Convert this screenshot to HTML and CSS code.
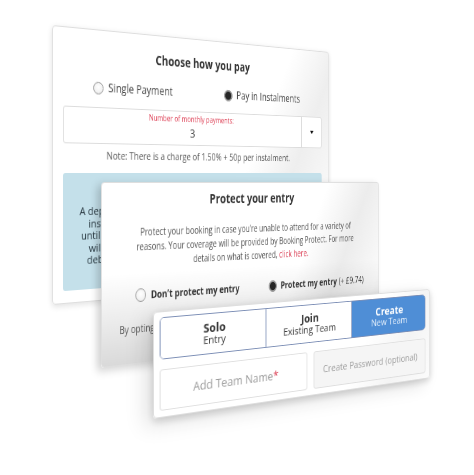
FILE: index.html
```html
<!DOCTYPE html>
<html lang="en">
<head>
<meta charset="utf-8">
<title>Booking steps</title>
<link rel="stylesheet" href="styles.css">
</head>
<body>
<div class="stage">

  <section class="card card-pay" id="card-pay">
    <h2 class="pay-title">Choose how you pay</h2>
    <div class="pay-options">
      <label class="radio"><span class="dot"></span>Single Payment</label>
      <label class="radio"><span class="dot dot-on"></span>Pay in Instalments</label>
    </div>
    <div class="select">
      <div class="select-value">
        <span class="select-label">Number of monthly payments:</span>
        <span class="select-num">3</span>
      </div>
      <div class="select-arrow">
        <svg width="6" height="4" viewBox="0 0 6 4"><polygon points="0,0 6,0 3,4" fill="#111"/></svg>
      </div>
    </div>
    <p class="pay-note">Note: There is a charge of 1.50% + 50p per instalment.</p>
    <div class="info">
      <p>A deposit of £25.00 will be taken today and the remaining sum<br>instalments will be collected automatically every month so<br>until the full balance is paid off. Your first instalment payment<br>will be taken a month from today, and the remaining ones<br>debited on the same day each month from the card on file.</p>
    </div>
  </section>

  <section class="card card-protect" id="card-protect">
    <h2 class="protect-title">Protect your entry</h2>
    <p class="protect-text">Protect your booking in case you’re unable to attend for a variety of<br>reasons. Your coverage will be provided by Booking Protect. For more<br>details on what is covered, <a class="link">click here.</a></p>
    <div class="protect-options">
      <label class="radio radio-bold"><span class="dot dot-lg"></span>Don’t protect my entry</label>
      <label class="radio radio-bold"><span class="dot dot-on"></span>Protect my entry <span class="price">(+ £9.74)</span></label>
    </div>
    <p class="protect-terms">By opting in you confirm that you have read and agree to the terms of cover.</p>
  </section>

  <section class="card card-team" id="card-team">
    <div class="seg">
      <div class="seg-item"><strong>Solo</strong><span>Entry</span></div>
      <div class="seg-item"><strong>Join</strong><span>Existing Team</span></div>
      <div class="seg-item seg-active"><strong>Create</strong><span>New Team</span></div>
    </div>
    <div class="fields">
      <div class="field">Add Team Name<span class="req">*</span></div>
      <div class="field field-pw">Create Password (optional)</div>
    </div>
  </section>

</div>
<script src="script.js"></script>
</body>
</html>
```

FILE: styles.css
```css
* { box-sizing: border-box; }

html, body {
  margin: 0;
  background: #fff;
}

body {
  font-family: "Open Sans", "Noto Sans", sans-serif;
  color: #444;
}

.stage {
  position: relative;
  width: 474px;
  height: 475px;
  overflow: hidden;
}

.card {
  position: absolute;
  left: 0;
  top: 0;
  transform-origin: 0 0;
  border: 1px solid #dedede;
  border-radius: 4px;
  background: linear-gradient(118deg, #ffffff 0%, #ffffff 62%, #eeeeee 76%, #f9f9f9 90%, #f4f4f4 100%);
}

/* ---------- card 1 : payment ---------- */
.card-pay {
  width: 400px;
  height: 280px;
  padding: 0 12px;
  box-shadow: 0 2px 6px rgba(0, 0, 0, 0.12);
}

.pay-title {
  margin: 17px 0 0;
  font-size: 13.5px;
  line-height: 18px;
  font-weight: 700;
  text-align: center;
  color: #333;
}

.pay-options {
  display: flex;
  justify-content: space-around;
  align-items: center;
  height: 16px;
  margin-top: 16px;
}

.radio {
  display: flex;
  align-items: center;
  gap: 6px;
  font-size: 12px;
  line-height: 16px;
  color: #444;
  white-space: nowrap;
}

.dot {
  width: 13px;
  height: 13px;
  border-radius: 50%;
  border: 1px solid #9a9a9a;
  background: radial-gradient(circle at 50% 40%, #ffffff 0%, #f2f2f2 60%, #dcdcdc 100%);
  flex: none;
}

.dot-lg {
  width: 14px;
  height: 14px;
}

.dot-on {
  background: radial-gradient(circle, #262626 0 4.2px, #8a8a8a 4.8px, #d8d8d8 6px);
  border-color: #8c8c8c;
}

.select {
  display: flex;
  height: 38px;
  margin-top: 12px;
  border: 1px solid #dcdcdc;
  border-radius: 3px;
  background: #fff;
}

.select-value {
  flex: 1;
  display: flex;
  flex-direction: column;
  align-items: center;
  padding-top: 2px;
}

.select-label {
  font-size: 8.5px;
  line-height: 11px;
  color: #dd3c52;
}

.select-num {
  margin-top: 2px;
  font-size: 13px;
  line-height: 16px;
  color: #444;
}

.select-arrow {
  width: 34px;
  display: flex;
  align-items: center;
  justify-content: center;
  border-left: 1px solid #dcdcdc;
}

.pay-note {
  margin: 5px 0 0;
  font-size: 10.6px;
  line-height: 14px;
  text-align: center;
  color: #555;
}

.info {
  height: 119px;
  margin-top: 11px;
  padding-top: 33px;
  border-radius: 3px;
  background: #c4e0ea;
}

.info p {
  margin: 0;
  font-size: 11.5px;
  line-height: 12.5px;
  text-align: center;
  color: #25343d;
  white-space: nowrap;
}

/* ---------- card 2 : protection ---------- */
.card-protect {
  width: 420px;
  height: 186px;
  padding: 0 8px;
  background:
    linear-gradient(180deg, rgba(255, 255, 255, 0) 50%, rgba(0, 0, 0, 0.15) 100%),
    linear-gradient(118deg, #ffffff 0%, #ffffff 64%, #ececec 78%, #fafafa 92%, #f3f3f3 100%);
  box-shadow: -5px 3px 10px rgba(0, 0, 0, 0.18);
}

.protect-title {
  margin: 8px 0 0;
  font-size: 14px;
  line-height: 18px;
  font-weight: 700;
  text-align: center;
  color: #333;
}

.protect-text {
  margin: 17px 0 0;
  font-size: 10.2px;
  line-height: 15px;
  text-align: center;
  color: #555;
  white-space: nowrap;
}

.link {
  color: #d8334a;
}

.protect-options {
  display: grid;
  grid-template-columns: 1fr 1fr;
  justify-items: center;
  align-items: center;
  height: 16px;
  margin-top: 19px;
  padding-left: 10px;
}

.radio-bold {
  font-size: 11px;
  font-weight: 700;
  color: #333;
}

.price {
  font-weight: 400;
  margin-left: -3px;
}

.protect-terms {
  margin: 19px 0 0;
  font-size: 10.5px;
  line-height: 15px;
  text-align: center;
  color: #555;
  white-space: nowrap;
}

/* ---------- card 3 : team ---------- */
.card-team {
  width: 350px;
  height: 108px;
  padding: 5px 6px 6px;
  background: linear-gradient(118deg, #ffffff 0%, #ffffff 70%, #f4f4f4 85%, #fbfbfb 100%);
  box-shadow: 0 3px 8px rgba(0, 0, 0, 0.16), -8px 6px 22px rgba(0, 0, 0, 0.12);
}

.seg {
  display: grid;
  grid-template-columns: 120fr 112fr 106fr;
  height: 43px;
  border: 1px solid #7d8fb6;
  border-radius: 5px;
  overflow: hidden;
}

.seg-item {
  display: flex;
  flex-direction: column;
  align-items: center;
  justify-content: center;
  color: #333;
  background: #fff;
}

.seg-item + .seg-item {
  border-left: 1px solid #7d8fb6;
}

.seg-item strong {
  font-size: 12px;
  line-height: 12px;
  font-weight: 700;
}

.seg-item span {
  font-size: 10.5px;
  line-height: 12px;
}

.seg-active {
  background: #4f8ed6;
  color: #fff;
}

.seg-active span {
  color: #e6f0fb;
}

.fields {
  display: grid;
  grid-template-columns: 171fr 155fr;
  gap: 8px;
  height: 42px;
  margin-top: 10px;
}

.field {
  display: flex;
  align-items: center;
  justify-content: center;
  border: 1px solid #dedede;
  border-radius: 3px;
  background: #fff;
  font-size: 12px;
  color: #9b9b9b;
  white-space: nowrap;
}

.field-pw {
  background: #f5f5f5;
  font-size: 10.5px;
}

.req {
  color: #d9344a;
}
```

FILE: script.js
```js
(function () {
  // Screen corners of each card: top-left, top-right, bottom-right, bottom-left.
  var quads = {
    'card-pay':     [[52, 25], [329, 52], [329, 281], [52, 305]],
    'card-protect': [[101, 182], [379, 182], [379, 336], [101, 368]],
    'card-team':    [[153, 312], [430, 289], [430, 378], [153, 419]]
  };

  function toMatrix(W, H, p) {
    var x0 = p[0][0], y0 = p[0][1], x1 = p[1][0], y1 = p[1][1];
    var x2 = p[2][0], y2 = p[2][1], x3 = p[3][0], y3 = p[3][1];
    var dx1 = x1 - x2, dx2 = x3 - x2, dx3 = x0 - x1 + x2 - x3;
    var dy1 = y1 - y2, dy2 = y3 - y2, dy3 = y0 - y1 + y2 - y3;
    var den = dx1 * dy2 - dx2 * dy1;
    var g = (dx3 * dy2 - dx2 * dy3) / den;
    var h = (dx1 * dy3 - dx3 * dy1) / den;
    var a = x1 - x0 + g * x1, b = x3 - x0 + h * x3, c = x0;
    var d = y1 - y0 + g * y1, e = y3 - y0 + h * y3, f = y0;
    var m = [a / W, d / W, 0, g / W, b / H, e / H, 0, h / H, 0, 0, 1, 0, c, f, 0, 1];
    return 'matrix3d(' + m.map(function (v) { return v.toFixed(9); }).join(',') + ')';
  }

  Object.keys(quads).forEach(function (id) {
    var el = document.getElementById(id);
    el.style.transform = toMatrix(el.offsetWidth, el.offsetHeight, quads[id]);
  });
})();
```
